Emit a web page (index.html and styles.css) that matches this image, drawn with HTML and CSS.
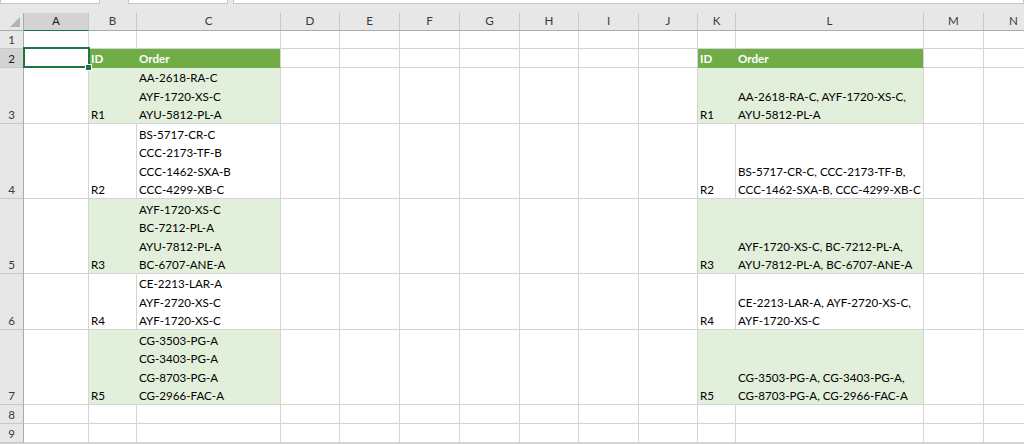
FILE: index.html
```html
<!DOCTYPE html>
<html lang="en">
<head>
    <meta charset="UTF-8">
    <meta name="viewport" content="width=device-width, initial-scale=1.0">
    <title>Orders</title>
    <link rel="stylesheet" href="styles.css">
</head>
<body>

<div class="topbar">
    <div class="box name-box"></div>
    <div class="box fx-box"></div>
    <div class="box formula-box"></div>
</div>
<div id="sheet" class="sheet"></div>

<script>
    const columns = ['A', 'B', 'C', 'D', 'E', 'F', 'G', 'H', 'I', 'J', 'K', 'L', 'M', 'N'];
    const rowCount = 9;

    // Pedidos por ID (una fila por ID)
    const orders = [
        ['R1', ['AA-2618-RA-C', 'AYF-1720-XS-C', 'AYU-5812-PL-A']],
        ['R2', ['BS-5717-CR-C', 'CCC-2173-TF-B', 'CCC-1462-SXA-B', 'CCC-4299-XB-C']],
        ['R3', ['AYF-1720-XS-C', 'BC-7212-PL-A', 'AYU-7812-PL-A', 'BC-6707-ANE-A']],
        ['R4', ['CE-2213-LAR-A', 'AYF-2720-XS-C', 'AYF-1720-XS-C']],
        ['R5', ['CG-3503-PG-A', 'CG-3403-PG-A', 'CG-8703-PG-A', 'CG-2966-FAC-A']]
    ];

    const cells = {};

    // Cabeceras de las dos tablas
    cells['B2'] = { html: 'ID', cls: 'thead inner' };
    cells['C2'] = { html: 'Order', cls: 'thead' };
    cells['K2'] = { html: 'ID', cls: 'thead inner' };
    cells['L2'] = { html: 'Order', cls: 'thead' };

    orders.forEach((order, i) => {
        const row = i + 3;
        const band = i % 2 === 0;
        const [id, items] = order;

        // Tabla izquierda: un pedido por línea
        cells['B' + row] = { html: id, cls: band ? 'band inner' : '' };
        cells['C' + row] = { html: items.join('<br>'), cls: band ? 'band' : '' };

        // Tabla derecha: texto unido con comas, dos pedidos por línea
        const lines = [];
        for (let j = 0; j < items.length; j += 2) {
            lines.push(items.slice(j, j + 2).join(', '));
        }
        cells['K' + row] = { html: id, cls: band ? 'band inner' : '' };
        cells['L' + row] = { html: lines.join(',<br>'), cls: band ? 'band' : '' };
    });

    function renderSheet() {
        const sheet = document.getElementById('sheet');
        let html = '<div class="cell head corner"><div class="triangle"></div></div>';

        columns.forEach(col => {
            const selected = col === 'A' ? ' selected-head' : '';
            html += `<div class="cell head col-head${selected}"><span class="text">${col}</span></div>`;
        });

        for (let row = 1; row <= rowCount; row++) {
            const selected = row === 2 ? ' selected-head' : '';
            html += `<div class="cell head row-head${selected}"><span class="text">${row}</span></div>`;

            columns.forEach(col => {
                const ref = col + row;
                const cell = cells[ref] || { html: '', cls: '' };
                const active = ref === 'A2' ? ' active' : '';
                html += `<div class="cell ${cell.cls}${active}"><span class="text">${cell.html}</span></div>`;
            });
        }

        sheet.innerHTML = html;
    }

    renderSheet();
</script>

</body>
</html>
```

FILE: styles.css
```css
body {
    margin: 0;
    padding: 0;
    font-family: Lato, "Liberation Sans", sans-serif;
    background-color: #fff;
    overflow: hidden;
}
.topbar {
    display: flex;
    height: 13px;
    background-color: #e7e7e7;
}
.box {
    box-sizing: border-box;
    height: 4px;
    background-color: #fff;
    border: 1px solid #c6c6c6;
    border-top: none;
}
.name-box {
    width: 100px;
}
.fx-box {
    width: 100px;
    margin-left: 28px;
}
.formula-box {
    flex: 1;
    margin-left: 5px;
}
.sheet {
    display: grid;
    grid-template-columns: 24px 65px 48px 144px 59px 60px 60px 60px 59px 60px 59px 38px 188px 60px 60px;
    grid-template-rows: 18px 18px 19px 56px 75px 75px 56px 75px 19px 19px;
    font-size: 11.6px;
    color: #000;
    border-bottom: 1px solid #d4d4d4;
}
.cell {
    box-sizing: border-box;
    display: flex;
    align-items: flex-end;
    padding: 0 2px;
    line-height: 18.6px;
    white-space: nowrap;
    overflow: hidden;
    border-right: 1px solid #d4d4d4;
    border-bottom: 1px solid #d4d4d4;
}
.cell .text {
    margin-bottom: -2px;
}
.head {
    justify-content: center;
    padding: 0;
    color: #3a3a3a;
    background-color: #e7e7e7;
    border-right-color: #c8c8c8;
    border-bottom-color: #c8c8c8;
}
.col-head {
    align-items: center;
    border-bottom-color: #ababab;
}
.col-head .text {
    margin-bottom: 0;
}
.row-head {
    border-right-color: #ababab;
}
.selected-head {
    color: #222;
    background-color: #d3d3d3;
}
.col-head.selected-head {
    border-bottom-color: #217346;
}
.row-head.selected-head {
    border-right-color: #217346;
}
.corner {
    align-items: flex-end;
    justify-content: flex-end;
    border-bottom-color: #ababab;
    border-right-color: #ababab;
}
.triangle {
    width: 10px;
    height: 10px;
    margin: 0 3px 3px 0;
    background-color: #b4b4b4;
    clip-path: polygon(100% 0, 100% 100%, 0 100%);
}
.thead {
    font-weight: bold;
    color: #fff;
    background-color: #70ad47;
    border-bottom-color: #70ad47;
}
.band {
    background-color: #e2efda;
}
.thead.inner {
    border-right-color: #70ad47;
}
.band.inner {
    border-right-color: #e2efda;
}
.active {
    position: relative;
    overflow: visible;
}
.active::after {
    content: "";
    position: absolute;
    top: -2px;
    left: -1px;
    right: -2px;
    bottom: -1px;
    border: 2px solid #217346;
}
.active::before {
    content: "";
    position: absolute;
    right: -4px;
    bottom: -4px;
    width: 5px;
    height: 5px;
    background-color: #217346;
    border: 1px solid #fff;
    z-index: 1;
}
```
